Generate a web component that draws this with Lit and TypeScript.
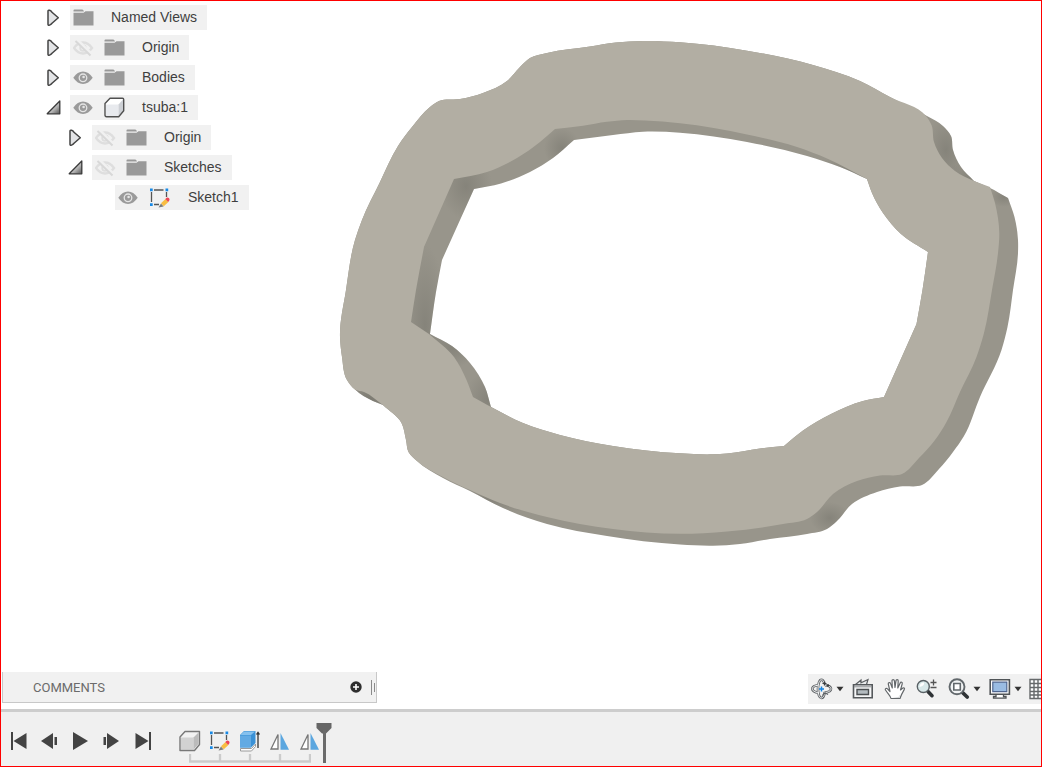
import { LitElement, html, svg, css, nothing, TemplateResult, SVGTemplateResult } from "lit";
import { customElement } from "lit/decorators.js";

type Point = [number, number];

const spacing = (a: Point, b: Point) => Math.hypot(b[0] - a[0], b[1] - a[1]) || 1;

/** Slope at b, weighted by how far away its neighbours are. */
function slope(a: Point, b: Point, c: Point): Point {
  const before = spacing(a, b);
  const after = spacing(b, c);
  const part = (i: number) =>
    (((b[i] - a[i]) / before) * after + ((c[i] - b[i]) / after) * before) / (before + after);
  return [part(0), part(1)];
}

/** Smooth curve through each run of points; runs are separated by "|" where the outline has a sharp corner. */
function outline(source: string): string {
  const runs = source.split("|").map((run) =>
    run.trim().split(/\s+/).map((pair) => pair.split(",").map(Number) as Point),
  );
  let d = `M${runs[0][0].join(" ")}`;
  runs.forEach((run, index) => {
    const points = [...run, runs[(index + 1) % runs.length][0]];
    const last = points.length - 1;
    for (let i = 0; i < last; i++) {
      const b = points[i];
      const c = points[i + 1];
      const reach = spacing(b, c) / 3;
      const chord: Point = [(c[0] - b[0]) / spacing(b, c), (c[1] - b[1]) / spacing(b, c)];
      const out = i > 0 ? slope(points[i - 1], b, c) : chord;
      const into = i + 1 < last ? slope(b, c, points[i + 2]) : chord;
      d += `C${b[0] + out[0] * reach} ${b[1] + out[1] * reach} ${c[0] - into[0] * reach} ${c[1] - into[1] * reach} ${c[0]} ${c[1]}`;
    }
  });
  return d + "Z";
}

const UPPER_LEFT_EDGE =
  "355,389.500 347,380 342,357 340,337 346,290 355,240 362,220 380,182 398,146 412,127 430,107 439,101 460,99 483,93 507,81 520,67 530,58 547,53 590,46.500 616,42.500 643,41 680,42.300 747,50.700 813,65 860,81 890,97";

const BODY_OUTER = outline(
  `383,405 373,401 ${UPPER_LEFT_EDGE} 927,116 943,126 951,136 953,150 961,167 | 974,181 990,188 | 1008,198 1014.500,217 1018,240 1018,253 1013,290 1007.500,327 1001.500,350 980,397 964,436 953,452 939,469 922,485 900,486.500 877,492 852,504 837,521 827,529 807,534 770,539 740,544 713,545.700 680,544.500 607,536 547,524 503,508 470,491 443,478 417,461 408.500,452 406,440 401.500,423`,
);
const FACE_OUTER = outline(
  `383,405 364,392 ${UPPER_LEFT_EDGE} 926,116 931.500,125 934,142 942,158 955,171 974,181 | 990,187 995,203 999.300,233 998,253 992,290 984,333 976.500,357 960,392 946.500,422 935,440 919,458 902,474 880,475.500 857,481 833,494 817,512 807,519 783,524 727,531.500 680,533.800 613,529 547,517 500,503 470,490 443,477 417,461 408.500,452 406,440 401.500,423`,
);

const SHARED_HOLE =
  "867,179 872,193 883,213 901,234 | 928,252 922.500,290 | 916.500,324 | 884,397 863,401 831,414 803,430.500 | 784,446 760,448.500 727,453.500 713,454.300 680,453.300 613,446 560,435 523,423";

const BODY_HOLE = outline(
  `474,189 501,183.500 530,172 553,158 | 574,140 613,135 643,131.700 680,132.700 747,142 807,156 840,167 | ${SHARED_HOLE} | 491,407 485,387 470,363 452,346 | 430,334 436,292 | 442,260`,
);
const FACE_HOLE = outline(
  `454,179 487,172 517,158 540,142 | 555,129 583,125.700 607,121.800 627,120 645,120.500 680,123.300 747,134.500 797,147 827,158.500 | ${SHARED_HOLE} 491,407 | 473,397 466.500,380 454,357 | 429,334 | 411,322 416,290 | 424,247`,
);

const folder = html`<svg width="21" height="20" viewBox="0 0 21 20" aria-hidden="true">
  <path d="M.5 2.500q0-1 1-1h7.500q1 0 1.500 1l.5 1H.5zM.5 4.700H10.500l2-1.500h8V17.500H.5z" fill="#999" />
</svg>`;

const eye = html`<svg width="21" height="20" viewBox="0 0 21 20" aria-hidden="true">
  <path d="M.3 9.800Q4.500 3.600 10 3.600t9.700 6.200Q15.500 16 10 16T.3 9.800z" fill="#9a9a9a" />
  <circle cx="10" cy="9.800" r="3.800" fill="none" stroke="#e4e4e4" stroke-width="1.300" />
  <circle cx="10.600" cy="9" r="1.300" fill="#e4e4e4" />
</svg>`;

const eyeOff = html`<svg width="21" height="20" viewBox="0 0 21 20" aria-hidden="true">
  <path d="M1 10Q5 4.500 10 4.500T19 10Q15 15.500 10 15.500T1 10z" fill="none" stroke="#dedede" stroke-width="2.300" />
  <circle cx="10" cy="10" r="2.800" fill="none" stroke="#dedede" stroke-width="1.800" />
  <path d="M3.500 1.500l15 15" stroke="#f1f1f1" stroke-width="3.500" />
  <path d="M2.500 3l15 14.500" stroke="#d8d8d8" stroke-width="2" />
</svg>`;

const component = html`<svg width="21" height="21" viewBox="0 0 21 21" aria-hidden="true">
  <path d="M1 6.500L6 1.200h14v12.500l-5 6H2.500Q1 19.700 1 18z" fill="#fff" />
  <path d="M2 7.500h12.500V19H2z" fill="#e8eaee" />
  <path d="M14.500 7.500L19.500 2v11.500l-5 5.500z" fill="#cdd0d5" />
  <path d="M1 6.500L6 1.200h12.500q1.200 0 1.200 1.200v11.300l-5 6H2.500Q1 19.700 1 18z" fill="none" stroke="#505050" stroke-width="1.400" stroke-linejoin="round" />
</svg>`;

const sketch = html`<svg width="22" height="22" viewBox="0 0 22 22" aria-hidden="true">
  <path d="M5 3h9.500M2.500 5v10M17.500 5v5M5 17.500h5" fill="none" stroke="#555" stroke-width="1.300" />
  <path d="M1 1.500h2.700v2.700H1zM16.500 1.500h2.700v2.700h-2.700zM1 16.300h2.700V19H1z" fill="#1789e6" />
  <path d="M9.500 20.500l2.500-4 2.700 2.900z" fill="#7d7d7d" />
  <path d="M12 16.300l4.500-4.300 2.900 3-4.600 4.300z" fill="#f8bd42" />
  <path d="M16.300 12l1.300-1.300q1-.7 2.200.4t.6 2.200l-1.200 1.800z" fill="#ee4558" />
</svg>`;

const collapsedArrow = html`<svg width="16" height="18" viewBox="0 0 16 18" aria-hidden="true">
  <path d="M2 2.200Q2 .8 3.500 1.300Q5 1.800 6 3.200L12.300 8.700l-6.300 5.500Q5 15.600 3.500 16.100Q2 16.600 2 15.200z" fill="#e3e4e6" stroke="#444" stroke-width="1.500" stroke-linejoin="round" />
</svg>`;

const expandedArrow = html`<svg width="16" height="18" viewBox="0 0 16 18" aria-hidden="true">
  <defs><linearGradient id="wedge" x1="0" x2="1" y1="0" y2="1"><stop offset=".4" stop-color="#e4e4e4" /><stop offset="1" stop-color="#555" /></linearGradient></defs>
  <path d="M13.800 2v12.800H1.200z" fill="url(#wedge)" stroke="#3a3a3a" stroke-width="1.300" stroke-linejoin="round" />
</svg>`;

interface Node {
  label: string;
  depth: number;
  icon: TemplateResult;
  visible?: boolean;
  expanded?: boolean;
}

const NODES: Node[] = [
  { label: "Named Views", depth: 0, icon: folder, expanded: false },
  { label: "Origin", depth: 0, icon: folder, visible: false, expanded: false },
  { label: "Bodies", depth: 0, icon: folder, visible: true, expanded: false },
  { label: "tsuba:1", depth: 0, icon: component, visible: true, expanded: true },
  { label: "Origin", depth: 1, icon: folder, visible: false, expanded: false },
  { label: "Sketches", depth: 1, icon: folder, visible: false, expanded: true },
  { label: "Sketch1", depth: 2, icon: sketch, visible: true },
];

const reset = css`
  * {
    box-sizing: border-box;
  }
  button {
    display: flex;
    align-items: center;
    justify-content: center;
    margin: 0;
    padding: 0;
    border: 0;
    background: none;
    color: inherit;
    font: inherit;
    cursor: pointer;
  }
  svg {
    display: block;
    flex: none;
  }
`;

@customElement("browser-tree")
class BrowserTree extends LitElement {
  static styles = [
    reset,
    css`
      :host {
        display: block;
      }
      .tree {
        display: flex;
        flex-direction: column;
        gap: 5px;
        margin: 0;
        padding: 4px 0 0 45px;
        list-style: none;
      }
      .node {
        display: flex;
        align-items: center;
        height: 25px;
      }
      .depth-1 {
        padding-left: 22px;
      }
      .depth-2 {
        padding-left: 45px;
      }
      .expander {
        flex: none;
        justify-content: flex-start;
        width: 24px;
        height: 25px;
      }
      .item {
        display: flex;
        align-items: center;
        height: 25px;
        padding: 0 10px 0 3px;
        background: #f1f1f1;
      }
      .visibility {
        width: 21px;
        margin-right: 10px;
      }
      .label {
        margin-left: 17px;
        line-height: 25px;
        white-space: nowrap;
      }
    `,
  ];

  render() {
    return html`<ul class="tree">
      ${NODES.map(
        (node) => html`<li class="node depth-${node.depth}">
          ${node.expanded === undefined
            ? html`<span class="expander"></span>`
            : html`<button class="expander" aria-label="Expand ${node.label}" aria-expanded=${node.expanded}>
                ${node.expanded ? expandedArrow : collapsedArrow}
              </button>`}
          <div class="item">
            ${node.visible === undefined
              ? nothing
              : html`<button class="visibility" aria-label="Show ${node.label}" aria-pressed=${node.visible}>
                  ${node.visible ? eye : eyeOff}
                </button>`}
            ${node.icon}
            <span class="label">${node.label}</span>
          </div>
        </li>`,
      )}
    </ul>`;
  }
}

@customElement("model-view")
class ModelView extends LitElement {
  static styles = css`
    :host {
      display: block;
      min-width: 0;
    }
    .scene {
      display: block;
      width: 100%;
      height: 100%;
    }
  `;

  private shade(cx: number, cy: number, rx: number, ry: number): SVGTemplateResult {
    return svg`<ellipse cx=${cx} cy=${cy} rx=${rx} ry=${ry} fill="url(#shadow)" />`;
  }

  render() {
    return html`<svg class="scene" viewBox="260 1 781 671" preserveAspectRatio="xMidYMid meet" role="img" aria-label="tsuba body">
      <defs>
        <radialGradient id="shadow">
          <stop offset="0" stop-color="#6f6e66" stop-opacity=".45" />
          <stop offset="1" stop-color="#6f6e66" stop-opacity="0" />
        </radialGradient>
        <clipPath id="solid"><path d=${BODY_OUTER + BODY_HOLE} clip-rule="evenodd" /></clipPath>
      </defs>
      <path d=${BODY_OUTER + BODY_HOLE} fill="#98958b" fill-rule="evenodd" />
      <g clip-path="url(#solid)">
        ${this.shade(466, 186, 26, 34)} ${this.shade(425, 325, 22, 80)} ${this.shade(488, 400, 22, 30)}
        ${this.shade(452, 348, 24, 20)} ${this.shade(562, 148, 18, 20)} ${this.shade(850, 172, 60, 14)}
        ${this.shade(946, 150, 20, 34)} ${this.shade(970, 178, 24, 18)} ${this.shade(1004, 197, 14, 10)}
        ${this.shade(830, 518, 20, 16)} ${this.shade(485, 500, 60, 14)} ${this.shade(370, 400, 26, 20)}
        ${this.shade(370, 400, 26, 20)}
      </g>
      <path d=${FACE_OUTER + FACE_HOLE} fill="#b2aea3" fill-rule="evenodd" />
    </svg>`;
  }
}

const ORBIT_RINGS = "M8 14.800C3.500 14.300 1.300 12.500 1.300 10.800S3.500 7.500 7.500 7.200M14 7.200c4 .3 6 1.800 6 3.600s-2.200 3.400-6.500 3.900M13.800 14C13.300 17.500 12 20 10.300 20S7 16.500 7 11 8.500 1.800 10.300 1.800 13 3.500 13.700 6";

const orbit = html`<svg width="22" height="22" viewBox="0 0 22 22" aria-hidden="true">
  <path d=${ORBIT_RINGS} fill="none" stroke="#5f6366" stroke-width="2.600" />
  <path d=${ORBIT_RINGS} fill="none" stroke="#f6f7f8" stroke-width="1" />
  <path d="M10.500 8.500v5M8 11h5" stroke="#1583e0" stroke-width="1.500" />
  <path d="M13.500 3.500v4M11.500 5.500h4M17 6v3M15.500 7.500h3" stroke="#3b3e40" stroke-width="1.200" />
  <path d="M11.500 17.500l2.500-2.700 3 1.700" fill="none" stroke="#5f6366" stroke-width="1.200" />
</svg>`;

const lookAt = html`<svg width="22" height="22" viewBox="0 0 22 22" aria-hidden="true">
  <path d="M3.500 6.500L9 2v2.700L16 1.500l-1.500 5" fill="#e9ebed" stroke="#5b5f62" stroke-width="1.200" />
  <path d="M1.500 6.800h18.700v13H1.500z" fill="#f6f7f8" stroke="#55595c" stroke-width="1.600" />
  <path d="M2 8.800h17.500" stroke="#8a8e91" stroke-width="1" />
  <path d="M5 11.500h11.500v5H5z" fill="#b3bbc0" stroke="#4b4f52" stroke-width="1.400" />
</svg>`;

const pan = html`<svg width="22" height="22" viewBox="0 0 22 22" aria-hidden="true">
  <path d="M7 20.500C6.500 18 4 16 1.500 12c-.8-1.500 1-2.200 2-1.200L6 13.500 4.300 6c-.3-1.600 1.700-2 2.200-.6L8.300 10 8 2.800c0-1.700 2.200-1.700 2.400 0L11 9.500l1-6.800c.2-1.600 2.300-1.400 2.200.2L13.800 10l2.400-5c.7-1.500 2.500-.7 2 .8L16.500 12l2-1.800c1.200-1 2.600.2 1.700 1.400C18.500 14.500 17 17 16 20.500z" fill="#fff" stroke="#63676a" stroke-width="1.200" stroke-linejoin="round" />
  <path d="M8 20h7l1.500-4-2 3z" fill="#cfd2d4" />
</svg>`;

const zoom = html`<svg width="22" height="22" viewBox="0 0 22 22" aria-hidden="true">
  <path d="M12 13.500l4 4.200" stroke="#2f3336" stroke-width="3.600" stroke-linecap="round" />
  <circle cx="7.300" cy="8.500" r="6" fill="#d8e8e9" stroke="#5a6266" stroke-width="1.400" />
  <path d="M3.500 9a4.200 4.200 0 0 1 4.500-4.500q1 3-4.500 4.500z" fill="#fff" />
  <path d="M17.500 1.500v6M14.500 4.500h6M14.500 9.500h6" stroke="#555" stroke-width="1.300" />
</svg>`;

const zoomWindow = html`<svg width="22" height="22" viewBox="0 0 22 22" aria-hidden="true">
  <path d="M14.500 14.500l4.700 4.500" stroke="#2f3336" stroke-width="3.800" stroke-linecap="round" />
  <circle cx="9" cy="8.800" r="7.500" fill="#f2f4f5" stroke="#62686c" stroke-width="1.900" />
  <path d="M5.800 5.500h6.500V12H5.800z" fill="#fff" stroke="#62686c" stroke-width="1.600" />
</svg>`;

const display = html`<svg width="22" height="22" viewBox="0 0 22 22" aria-hidden="true">
  <path d="M7 16h7.500v2.500H17v1.700H4.500v-1.700H7z" fill="#fff" stroke="#505457" stroke-width="1.300" />
  <path d="M1.200 1.700h19.200v14.500H1.200z" fill="#fff" stroke="#505457" stroke-width="1.600" />
  <path d="M3.800 4.200h14v9.500h-14z" fill="#9abce2" stroke="#50668f" stroke-width="1.200" />
</svg>`;

const grid = html`<svg width="22" height="22" viewBox="0 0 22 22" aria-hidden="true">
  <path d="M1 1.500h20v19H1zM5 1.500v19M9 1.500v19M13 1.500v19M1 5.500h20M1 9.500h20M1 13.500h20M1 17h20" fill="#fff" stroke="#66696b" stroke-width="1.400" />
</svg>`;

const caret = html`<svg width="8" height="6" viewBox="0 0 8 6" aria-hidden="true"><path d="M.5 .8h7L4 5.200z" fill="#333" /></svg>`;

@customElement("view-toolbar")
class ViewToolbar extends LitElement {
  static styles = [
    reset,
    css`
      :host {
        display: block;
      }
      .bar {
        display: flex;
        align-items: center;
        gap: 8px;
        height: 30px;
        padding-left: 2px;
        background: #f1f1f1;
        overflow: hidden;
      }
      .tool {
        flex: none;
        width: 24px;
        height: 30px;
      }
      .menu {
        flex: none;
        width: 8px;
        height: 30px;
        margin: 0 -1px 0 -6px;
      }
      .cut {
        justify-content: flex-start;
        width: 12px;
        overflow: hidden;
      }
    `,
  ];

  private menu(label: string) {
    return html`<button class="menu" aria-label=${label}>${caret}</button>`;
  }

  render() {
    return html`<div class="bar" role="toolbar" aria-label="View">
      <button class="tool" aria-label="Orbit">${orbit}</button>
      ${this.menu("Orbit options")}
      <button class="tool" aria-label="Look at">${lookAt}</button>
      <button class="tool" aria-label="Pan">${pan}</button>
      <button class="tool" aria-label="Zoom">${zoom}</button>
      <button class="tool" aria-label="Zoom window">${zoomWindow}</button>
      ${this.menu("Zoom options")}
      <button class="tool" aria-label="Display settings">${display}</button>
      ${this.menu("Display options")}
      <button class="tool cut" aria-label="Grid and snaps">${grid}</button>
    </div>`;
  }
}

const playIcon = (shape: SVGTemplateResult) =>
  html`<svg width="18" height="20" viewBox="0 0 18 20" fill="#434343" aria-hidden="true">${shape}</svg>`;

const PLAYBACK: [string, TemplateResult][] = [
  ["Go to start", playIcon(svg`<path d="M2 1h2v18H2zM17.500 2v16L4.500 10z" />`)],
  ["Step back", playIcon(svg`<path d="M13 2v16L1 10zM14.500 6H17v8h-2.500z" />`)],
  ["Play", playIcon(svg`<path d="M2 1v18l15-9z" />`)],
  ["Step forward", playIcon(svg`<path d="M1.500 6H4v8H1.500zM5 2v16l12-8z" />`)],
  ["Go to end", playIcon(svg`<path d="M2.500 2v16l13-8zM16 1h2v18h-2z" />`)],
];

const boxFeature = html`<svg width="22" height="22" viewBox="0 0 22 22" aria-hidden="true">
  <path d="M1 7l5-5.500h14v13l-5 6H1z" fill="#f2f2f2" />
  <path d="M2 7.500h12.500v12H2z" fill="#d2d2d2" /><path d="M14.500 7.500l5-5v11.500l-5 5.500z" fill="#bbb" />
  <path d="M1 7l5-5.500h14.500v13l-5 6H1z" fill="none" stroke="#787878" stroke-width="1.400" stroke-linejoin="round" />
</svg>`;

const extrudeFeature = html`<svg width="22" height="22" viewBox="0 0 22 22" aria-hidden="true">
  <path d="M1.500 18.500h11l4-4.500v2.500L12.500 21h-11z" fill="#fff" stroke="#9a9a9a" />
  <path d="M1 5l4-4h11.500v12l-4.500 4.500H1z" fill="#3a91d6" />
  <path d="M1 5.500h11V17.500H1z" fill="#62aae3" /><path d="M1.500 5L5 1.500h11L12 5z" fill="#86c1ee" />
  <path d="M19 3v15M17.500 4.500L19 2.300l1.500 2.200" fill="none" stroke="#333" stroke-width="1.300" />
</svg>`;

const mirrorFeature = html`<svg width="22" height="22" viewBox="0 0 22 22" aria-hidden="true">
  <path d="M9 4.500v14.500H2z" fill="#fff" stroke="#777" stroke-width="1.300" />
  <path d="M11.500 3V19.700H20z" fill="#5aa6df" />
</svg>`;

const FEATURES: [string, TemplateResult][] = [
  ["Component", boxFeature],
  ["Sketch", sketch],
  ["Extrude", extrudeFeature],
  ["Mirror", mirrorFeature],
  ["Mirror", mirrorFeature],
];

@customElement("design-timeline")
class DesignTimeline extends LitElement {
  static styles = [
    reset,
    css`
      :host {
        display: block;
      }
      .timeline {
        display: flex;
        align-items: flex-start;
        height: 57px;
        padding: 10px 0 0 5px;
        border-top: 3px solid #cdcdcd;
        background: #f0f0f0;
      }
      .playback {
        display: flex;
        gap: 7px;
        padding-top: 7px;
      }
      .step {
        width: 24px;
        height: 24px;
      }
      .history {
        margin-left: 24px;
        padding-top: 7px;
      }
      .features {
        display: flex;
        gap: 6px;
      }
      .rail {
        margin: 1px auto 0;
      }
      .marker {
        margin-left: -6px;
      }
    `,
  ];

  render() {
    return html`<div class="timeline">
      <div class="playback">
        ${PLAYBACK.map(([label, icon]) => html`<button class="step" aria-label=${label}>${icon}</button>`)}
      </div>
      <div class="history">
        <div class="features">
          ${FEATURES.map(([label, icon]) => html`<button class="step" aria-label=${label}>${icon}</button>`)}
        </div>
        <svg class="rail" width="122" height="9" viewBox="0 0 122 9" aria-hidden="true">
          <path d="M1 0v7.500h120V0M31 0v7M61 0v7M91 0v7" fill="none" stroke="#cbcbcb" stroke-width="2.300" />
        </svg>
      </div>
      <svg class="marker" width="16" height="42" viewBox="0 0 16 42" role="img" aria-label="History marker">
        <path d="M.5 1h15v5L10 11.500H6L.5 6z" fill="#666" /><path d="M7 8h3v33H7z" fill="#6b6b6b" />
      </svg>
    </div>`;
  }
}

@customElement("app-root")
class AppRoot extends LitElement {
  static styles = [
    reset,
    css`
      :host {
        display: block;
        color: #3f3f3f;
        font: 14px "Liberation Sans", Arial, sans-serif;
      }
      .window {
        display: flex;
        flex-direction: column;
        height: 100vh;
        border: 1px solid #f00;
        background: #fff;
        overflow: hidden;
      }
      .workspace {
        display: flex;
        flex: 1;
        min-height: 0;
      }
      .sidebar {
        flex: none;
        width: 259px;
      }
      .stage {
        flex: 1;
      }
      .dock {
        display: flex;
        align-items: flex-start;
        justify-content: space-between;
        height: 37px;
        padding-left: 1px;
      }
      .comments {
        display: flex;
        align-items: center;
        width: 375px;
        height: 31px;
        padding: 0 1px 0 30px;
        border: solid #c8c8c8;
        border-width: 0 1px 1px;
        background: #f1f1f1;
      }
      .heading {
        flex: 1;
        color: #6b6b6b;
        font: 13px Roboto, sans-serif;
      }
      .add {
        width: 14px;
        height: 14px;
        margin-right: 7px;
      }
      .tools {
        margin-top: 2px;
      }
    `,
  ];

  render() {
    return html`<main class="window">
      <div class="workspace">
        <browser-tree class="sidebar"></browser-tree>
        <model-view class="stage"></model-view>
      </div>
      <div class="dock">
        <section class="comments">
          <span class="heading">COMMENTS</span>
          <button class="add" aria-label="Add comment">
            <svg width="12" height="12" viewBox="0 0 12 12" aria-hidden="true">
              <circle cx="6" cy="6" r="5.700" fill="#2e2e2e" /><path d="M6 3v6M3 6h6" stroke="#fff" stroke-width="1.600" />
            </svg>
          </button>
          <svg width="5" height="15" viewBox="0 0 5 15" aria-hidden="true">
            <path d="M1.500 0v15M4.500 3v9" stroke="#8a8a8a" />
          </svg>
        </section>
        <view-toolbar class="tools"></view-toolbar>
      </div>
      <design-timeline></design-timeline>
    </main>`;
  }
}
